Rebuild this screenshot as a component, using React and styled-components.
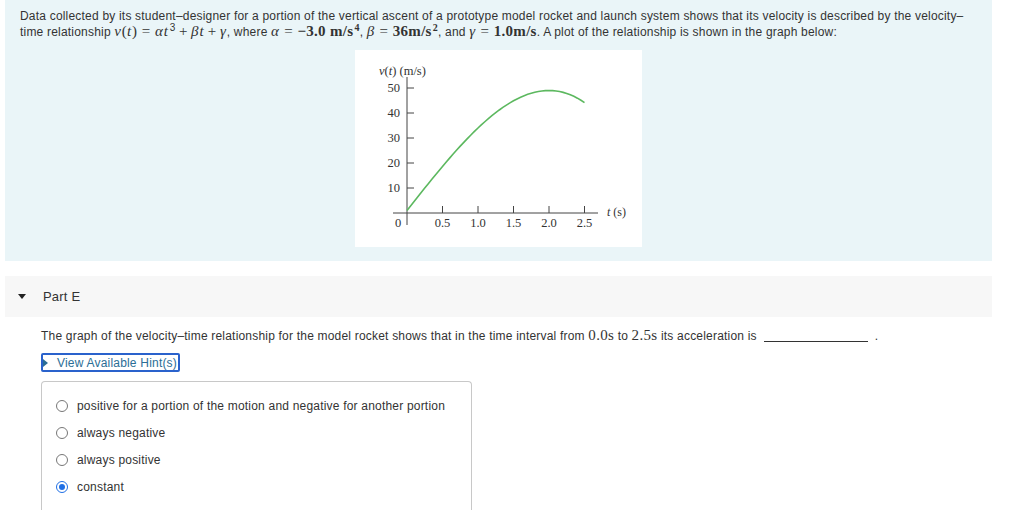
import React from "react";
import styled, { createGlobalStyle } from "styled-components";

const Global = createGlobalStyle`
  html, body { margin: 0; padding: 0; background: #fff; }
  body { font-family: "Liberation Sans", Arial, sans-serif; color: #333; letter-spacing: 0.2px; }
`;

const Page = styled.div`
  width: 987px;
  margin-left: 5px;
`;

const Intro = styled.section`
  background: #eaf5f8;
  padding: 9px 15px 14px 15px;
  font-size: 12px;
  line-height: 15px;
`;

const Para = styled.p`
  margin: 0;
  line-height: 15px;
`;

const M = styled.span`
  font-family: "Liberation Serif", "DejaVu Serif", serif;
  font-size: 15px;
  line-height: 1;
  letter-spacing: ${(p) => (p.$i ? "0.8px" : "0.3px")};
  font-style: ${(p) => (p.$i ? "italic" : "normal")};
  font-weight: ${(p) => (p.$b ? "bold" : "normal")};
`;

const Op = styled.span`
  font-family: "Liberation Serif", "DejaVu Serif", serif;
  font-size: 15px;
  line-height: 1;
  margin: 0 ${(p) => (p.$rel ? "4.5px" : "3.5px")};
`;

const Sup = styled.sup`
  font-size: 10px;
  line-height: 0;
  vertical-align: 5px;
  margin-left: 1px;
`;

const Figure = styled.div`
  width: 287px;
  height: 197px;
  margin: 10px auto 0;
  background: #fff;
`;

const PartBar = styled.div`
  margin-top: 15px;
  height: 41px;
  background: #f7f7f7;
  display: flex;
  align-items: center;
  font-size: 13px;
  color: #333;
`;

const Caret = styled.span`
  width: 0;
  height: 0;
  margin-left: 13px;
  margin-right: 17px;
  border-left: 4px solid transparent;
  border-right: 4px solid transparent;
  border-top: 5px solid #222;
`;

const Body = styled.div`
  padding: 11px 0 0 36px;
  font-size: 12px;
`;

const Question = styled.p`
  margin: 0;
  line-height: 15px;
`;

const Blank = styled.span`
  display: inline-block;
  width: 104px;
  border-bottom: 1px solid #333;
  margin: 0 3px 0 4px;
  vertical-align: -2px;
`;

const HintButton = styled.button`
  margin-top: 9px;
  display: flex;
  align-items: center;
  gap: 9px;
  height: 19px;
  padding: 0 1px 0 0;
  border: 2px solid #2a62cc;
  border-radius: 2px;
  background: #fff;
  color: #2b6e96;
  font-family: "Liberation Sans", Arial, sans-serif;
  font-size: 12px;
  letter-spacing: 0.2px;
  cursor: pointer;
`;

const HintArrow = styled.span`
  width: 0;
  height: 0;
  border-top: 4px solid transparent;
  border-bottom: 4px solid transparent;
  border-left: 5px solid #2b6e96;
`;

const Options = styled.div`
  margin-top: 9px;
  width: 415px;
  border: 1px solid #c8c8c8;
  border-bottom: none;
  border-radius: 4px 4px 0 0;
  padding: 16px 0 20px 14px;
  display: flex;
  flex-direction: column;
  gap: 12px;
`;

const Option = styled.label`
  display: flex;
  align-items: center;
  gap: 9px;
  height: 15px;
  font-size: 12px;
  color: #333;
`;

const Radio = styled.span`
  width: 12px;
  height: 12px;
  box-sizing: border-box;
  border-radius: 50%;
  border: 1px solid ${(p) => (p.$on ? "#1f6fe5" : "#777")};
  background: #fff;
  display: flex;
  align-items: center;
  justify-content: center;
  &::after {
    content: "";
    width: 6px;
    height: 6px;
    border-radius: 50%;
    background: ${(p) => (p.$on ? "#1f6fe5" : "transparent")};
  }
`;

function Graph() {
  const ox = 52;
  const oy = 163;
  const pts = [];
  for (let i = 0; i <= 50; i++) {
    const t = (2.5 * i) / 50;
    const v = -3 * t * t * t + 36 * t + 1;
    pts.push(`${(ox + 71 * t).toFixed(2)},${(oy - 2.5 * v).toFixed(2)}`);
  }
  const yTicks = [10, 20, 30, 40, 50];
  const xTicks = ["0.5", "1.0", "1.5", "2.0", "2.5"];
  const serif = '"Liberation Serif", "DejaVu Serif", serif';
  return (
    <svg width="287" height="197" viewBox="0 0 287 197">
      <g fill="#333" fontFamily={serif} letterSpacing="0">
        <text x="24" y="25" fontSize="12.5">
          <tspan fontStyle="italic">v</tspan>(<tspan fontStyle="italic">t</tspan>) (m/s)
        </text>
        {yTicks.map((v) => (
          <text key={v} x="45" y={oy - 2.5 * v + 4} fontSize="12.5" textAnchor="end">
            {v}
          </text>
        ))}
        <text x="40" y="177" fontSize="12.5">0</text>
        {xTicks.map((l, i) => (
          <text key={l} x={ox + 35.5 * (i + 1)} y="177" fontSize="12.5" textAnchor="middle">
            {l}
          </text>
        ))}
        <text x="252" y="166" fontSize="12">
          <tspan fontStyle="italic">t</tspan> (s)
        </text>
      </g>
      <g stroke="#444" strokeWidth="1" fill="none">
        <line x1={ox} y1="27" x2={ox} y2="175" />
        <line x1="38" y1={oy} x2="243" y2={oy} />
        {yTicks.map((v) => (
          <line key={v} x1={ox} y1={oy - 2.5 * v} x2={ox + 7} y2={oy - 2.5 * v} />
        ))}
        {xTicks.map((l, i) => (
          <line key={l} x1={ox + 35.5 * (i + 1)} y1={oy} x2={ox + 35.5 * (i + 1)} y2={oy - 7} />
        ))}
      </g>
      <polyline points={pts.join(" ")} fill="none" stroke="#5cb85f" strokeWidth="1.6" />
    </svg>
  );
}

const options = [
  { label: "positive for a portion of the motion and negative for another portion", on: false },
  { label: "always negative", on: false },
  { label: "always positive", on: false },
  { label: "constant", on: true },
];

export default function App() {
  return (
    <>
      <Global />
      <Page>
        <Intro>
          <Para>
            Data collected by its student–designer for a portion of the vertical ascent of a prototype model
            rocket and launch system shows that its velocity is described by the velocity–
          </Para>
          <Para>
            time relationship <M $i>v</M><M>(</M><M $i>t</M><M>)</M><Op $rel>=</Op><M $i>αt</M>
            <Sup>3</Sup><Op>+</Op><M $i>βt</M><Op>+</Op><M $i>γ</M>, where{" "}
            <M $i>α</M><Op $rel>=</Op><M $b>−3.0 m/s<Sup>4</Sup></M>,{" "}
            <M $i>β</M><Op $rel>=</Op><M $b>36m/s<Sup>2</Sup></M>, and{" "}
            <M $i>γ</M><Op $rel>=</Op><M $b>1.0m/s</M>. A plot of the relationship is shown in the graph below:
          </Para>
          <Figure>
            <Graph />
          </Figure>
        </Intro>
        <PartBar>
          <Caret />
          Part E
        </PartBar>
        <Body>
          <Question>
            The graph of the velocity–time relationship for the model rocket shows that in the time interval
            from <M>0.0s</M> to <M>2.5s</M> its acceleration is <Blank /> .
          </Question>
          <HintButton>
            <HintArrow />
            View Available Hint(s)
          </HintButton>
          <Options>
            {options.map((o) => (
              <Option key={o.label}>
                <Radio $on={o.on} />
                {o.label}
              </Option>
            ))}
          </Options>
        </Body>
      </Page>
    </>
  );
}
